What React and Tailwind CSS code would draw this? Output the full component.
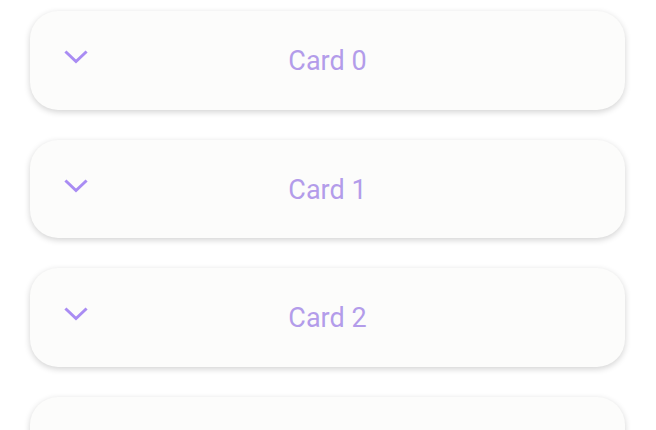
const cards = ["Card 0", "Card 1", "Card 2", "Card 3"];

function Chevron() {
  return (
    <svg
      className="absolute left-[34px] top-[39px]"
      width="24"
      height="16"
      viewBox="0 0 24 16"
      fill="none"
      stroke="#a98cf3"
      strokeWidth="3"
      strokeLinecap="square"
    >
      <polyline points="2.5,2.5 12,11.5 21.5,2.5" />
    </svg>
  );
}

export default function App() {
  return (
    <div className="h-[430px] overflow-hidden bg-white pt-[11px] font-['Roboto',sans-serif]">
      <div className="flex flex-col gap-[30px] px-[30px] pr-[31px]">
        {cards.map((c) => (
          <div
            key={c}
            className="relative flex h-[98.5px] shrink-0 items-center justify-center rounded-[28px] bg-[#fcfcfb] shadow-[0_2px_6px_rgba(0,0,0,0.18)]"
          >
            <Chevron />
            <span className="pt-[2px] text-[27px] text-[#b39cea]">{c}</span>
          </div>
        ))}
      </div>
    </div>
  );
}
